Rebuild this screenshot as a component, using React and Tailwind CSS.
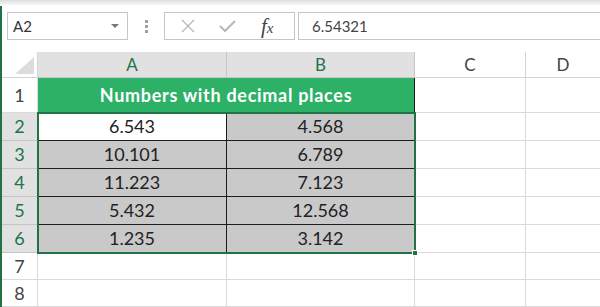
import React from "react";

const rows = [
  ["6.543", "4.568"],
  ["10.101", "6.789"],
  ["11.223", "7.123"],
  ["5.432", "12.568"],
  ["1.235", "3.142"],
];

function ColHead({ label, selected, last }) {
  return (
    <div
      className={`flex items-center justify-center border-b text-[17px] ${
        last ? "" : "border-r"
      } ${
        selected
          ? "bg-[#e1e1e1] text-[#217346] border-[#c6c6c6]"
          : "bg-white text-[#444] border-[#d4d4d4]"
      }`}
    >
      {label}
    </div>
  );
}

function RowHead({ label, selected }) {
  return (
    <div
      className={`flex items-center justify-center border-r border-b text-[18px] ${
        selected
          ? "bg-[#e1e1e1] text-[#217346] border-[#c6c6c6]"
          : "bg-white text-[#444] border-[#dadada]"
      }`}
    >
      {label}
    </div>
  );
}

function App() {
  return (
    <div
      className="w-[600px] h-[307px] overflow-hidden bg-white flex flex-col"
      style={{ fontFamily: "Lato, 'Liberation Sans', sans-serif" }}
    >
      <div className="h-[6px] bg-gradient-to-b from-[#dcdcdc] to-white" />
      <div className="flex-1 flex flex-col border-l-2 border-[#217346]">
        {/* formula bar */}
        <div className="h-[46px] flex items-start pt-[6px] pl-[5px]">
          <div className="w-[121px] h-[28px] border border-[#c6c6c6] flex items-center justify-between pl-[5px] pr-[8px]">
            <span className="text-[15px] text-[#333]">A2</span>
            <svg width="8" height="5" viewBox="0 0 8 5">
              <path d="M0 0 L8 0 L4 4 Z" fill="#777" />
            </svg>
          </div>
          <div className="w-[36px] h-[28px] flex flex-col items-center justify-center gap-[2px]">
            <span className="w-[3px] h-[3px] bg-[#a0a0a0]" />
            <span className="w-[3px] h-[3px] bg-[#a0a0a0]" />
            <span className="w-[3px] h-[3px] bg-[#a0a0a0]" />
          </div>
          <div className="w-[131px] h-[28px] border border-[#c6c6c6] flex items-center pl-[16px] gap-[24px]">
            <svg width="14" height="14" viewBox="0 0 14 14">
              <path d="M1 1 L13 13 M13 1 L1 13" stroke="#b8b8b8" strokeWidth="1.3" />
            </svg>
            <svg width="17" height="14" viewBox="0 0 17 14">
              <path d="M1 7 L6 12 L16 2" stroke="#b8b8b8" strokeWidth="2" fill="none" />
            </svg>
            <span
              className="italic text-[21px] leading-none text-[#444] ml-[1px]"
              style={{ fontFamily: "'Liberation Serif', serif" }}
            >
              f<span className="text-[15px]">x</span>
            </span>
          </div>
          <div className="flex-1 h-[28px] ml-[3px] border-y border-l border-[#c6c6c6] flex items-center pl-[13px]">
            <span className="text-[15px] text-[#444]">6.54321</span>
          </div>
        </div>

        {/* sheet */}
        <div className="relative grid grid-cols-[36px_189px_188px_111px_1fr] grid-rows-[26px_35px_28px_28px_28px_28px_28px_27px_27px]">
          <div className="relative bg-white border-r border-b border-[#d4d4d4]">
            <svg className="absolute right-[3px] bottom-[3px]" width="19" height="17" viewBox="0 0 19 17">
              <path d="M19 0 L19 17 L0 17 Z" fill="#dcdcdc" />
            </svg>
          </div>
          <ColHead label="A" selected />
          <ColHead label="B" selected />
          <ColHead label="C" />
          <ColHead label="D" last />

          <RowHead label="1" />
          <div className="col-span-2 bg-[#2cb166] border-r border-b border-[#1d1d1d] flex items-center justify-center">
            <span className="text-white font-bold text-[18px] tracking-[0.7px]">
              Numbers with decimal places
            </span>
          </div>
          <div className="border-r border-b border-[#dadada]" />
          <div className="border-b border-[#dadada]" />

          {rows.map((r, i) => (
            <React.Fragment key={i}>
              <RowHead label={String(i + 2)} selected />
              <div
                className={`flex items-center justify-center border-r border-b border-[#1d1d1d] text-[18px] text-[#222] ${
                  i === 0 ? "bg-white" : "bg-[#c9c9c9]"
                }`}
              >
                {r[0]}
              </div>
              <div className="flex items-center justify-center border-r border-b border-[#1d1d1d] text-[18px] text-[#222] bg-[#c9c9c9]">
                {r[1]}
              </div>
              <div className="border-r border-b border-[#dadada]" />
              <div className="border-b border-[#dadada]" />
            </React.Fragment>
          ))}

          {["7", "8"].map((n) => (
            <React.Fragment key={n}>
              <RowHead label={n} />
              <div className="border-r border-b border-[#dadada]" />
              <div className="border-r border-b border-[#dadada]" />
              <div className="border-r border-b border-[#dadada]" />
              <div className="border-b border-[#dadada]" />
            </React.Fragment>
          ))}

          {/* selection outline + fill handle */}
          <div className="absolute left-[35px] top-[60px] w-[379px] h-[142px] border-2 border-[#217346] pointer-events-none" />
          <div className="absolute left-[410px] top-[198px] w-[6px] h-[6px] bg-[#217346] border border-white pointer-events-none" />
        </div>
      </div>
    </div>
  );
}

export default App;
